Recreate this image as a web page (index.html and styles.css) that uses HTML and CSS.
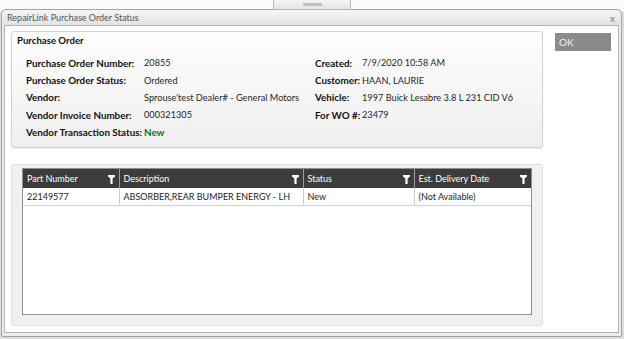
FILE: index.html
```html
<!DOCTYPE html>
<html lang="en">
<head>
    <meta charset="UTF-8">
    <title>RepairLink Purchase Order Status</title>
    <link rel="stylesheet" href="styles.css">
</head>
<body>
    <div class="backdrop">
        <h2 class="bg-title">Purchase Order</h2>
    </div>

    <div class="dialog">
        <div class="titlebar">
            <span class="title">RepairLink Purchase Order Status</span>
            <span class="close">x</span>
        </div>
        <div class="frame">
            <div class="content">
                <div class="main">
                    <section class="panel po">
                        <h3>Purchase Order</h3>
                        <div class="fields">
                            <span class="lbl">Purchase Order Number:</span><span>20855</span>
                            <span class="lbl">Created:</span><span>7/9/2020 10:58 AM</span>

                            <span class="lbl">Purchase Order Status:</span><span>Ordered</span>
                            <span class="lbl">Customer:</span><span>HAAN, LAURIE</span>

                            <span class="lbl">Vendor:</span><span>Sprouse'test Dealer# - General Motors</span>
                            <span class="lbl">Vehicle:</span><span>1997 Buick Lesabre 3.8 L 231 CID V6</span>

                            <span class="lbl">Vendor Invoice Number:</span><span>000321305</span>
                            <span class="lbl">For WO #:</span><span>23479</span>

                            <span class="lbl">Vendor Transaction Status:</span><span class="new">New</span>
                            <span></span><span></span>
                        </div>
                    </section>

                    <section class="panel parts">
                        <div class="grid">
                            <table>
                                <colgroup>
                                    <col class="c1"><col class="c2"><col class="c3"><col class="c4">
                                </colgroup>
                                <thead>
                                    <tr>
                                        <th>Part Number <svg class="filter" viewBox="0 0 7 9"><path d="M0 0H7V1.5L4.6 3.6V9H2.4V3.6L0 1.5Z"/></svg></th>
                                        <th>Description <svg class="filter" viewBox="0 0 7 9"><path d="M0 0H7V1.5L4.6 3.6V9H2.4V3.6L0 1.5Z"/></svg></th>
                                        <th>Status <svg class="filter" viewBox="0 0 7 9"><path d="M0 0H7V1.5L4.6 3.6V9H2.4V3.6L0 1.5Z"/></svg></th>
                                        <th>Est. Delivery Date <svg class="filter" viewBox="0 0 7 9"><path d="M0 0H7V1.5L4.6 3.6V9H2.4V3.6L0 1.5Z"/></svg></th>
                                    </tr>
                                </thead>
                                <tbody>
                                    <tr>
                                        <td>22149577</td>
                                        <td>ABSORBER,REAR BUMPER ENERGY - LH</td>
                                        <td>New</td>
                                        <td>(Not Available)</td>
                                    </tr>
                                </tbody>
                            </table>
                        </div>
                    </section>
                </div>
                <div class="side">
                    <button class="ok">OK</button>
                </div>
            </div>
        </div>
    </div>

    <div class="grip"><span></span></div>
</body>
</html>
```

FILE: styles.css
```css
body {
    margin: 0;
    width: 624px;
    height: 339px;
    overflow: hidden;
    background: #dcdcdc;
    font-family: Lato, "Open Sans", sans-serif;
    font-size: 9.2px;
    color: #262626;
}

.backdrop {
    height: 12px;
    background: #fbfbfb;
    overflow: hidden;
}
.bg-title {
    margin: -11px 0 0 42px;
    font-size: 11px;
    color: #1d2b55;
}

/* splitter grip sitting over the top edge */
.grip {
    position: absolute;
    left: 273px;
    top: 0;
    width: 76px;
    height: 9px;
    border: 1px solid #b5b5b5;
    border-top: none;
    background: linear-gradient(#f4f4f4, #e4e4e8);
    display: flex;
    justify-content: center;
    align-items: center;
}
.grip span {
    width: 19px;
    height: 3px;
    background: #c2c2c2;
}

.dialog {
    position: absolute;
    left: 1px;
    top: 9px;
    width: 621px;
    height: 328px;
    box-sizing: border-box;
    border: 1px solid #a3a3a3;
    border-radius: 5px 5px 2px 2px;
    background: #ececec;
    display: flex;
    flex-direction: column;
}

.titlebar {
    height: 15px;
    display: flex;
    align-items: center;
    justify-content: space-between;
    padding: 0 6px 0 5px;
    background: linear-gradient(#f6f6f6, #e2e2e2);
    border-radius: 5px 5px 0 0;
    color: #555;
}
.title {
    font-size: 9px;
}
.close {
    font-size: 10px;
    color: #777;
}

.frame {
    flex: 1;
    padding: 0 2px 3px;
    display: flex;
}
.content {
    flex: 1;
    background: #fff;
    border: 1px solid #b4b4b4;
    padding: 5px 4px 0 6px;
    display: flex;
    gap: 12px;
}

.main {
    width: 532px;
}

.panel {
    box-sizing: border-box;
    border: 1px solid #d2d2d2;
    border-radius: 3px;
}

.po {
    height: 117px;
    padding: 1px 0 0 5px;
    background: linear-gradient(#fefefe, #efefef);
    box-shadow: 0 1px 1px rgba(0, 0, 0, 0.08);
}
.po h3 {
    margin: 0;
    font-size: 9.6px;
    line-height: 16px;
    color: #111;
}

.fields {
    margin: 5px 0 0 9px;
    display: grid;
    grid-template-columns: 118px 171px 47px auto;
    grid-auto-rows: 17.4px;
    align-items: center;
    white-space: nowrap;
}
.lbl {
    font-size: 9.8px;
    font-weight: bold;
    color: #111;
}
.new {
    font-size: 9.8px;
    font-weight: bold;
    color: #137313;
}

.parts {
    margin-top: 16px;
    height: 162px;
    padding: 3px 10px 10px 10px;
    background: #f0f0f0;
    border-color: #dedede;
}
.grid {
    height: 100%;
    box-sizing: border-box;
    border: 1px solid #8f8f8f;
    background: #fff;
    font-size: 9px;
}
.grid table {
    width: 100%;
    table-layout: fixed;
    border-collapse: collapse;
}
.c1 { width: 96px; }
.c2 { width: 184px; }
.c3 { width: 111px; }
.c4 { width: auto; }

.grid th {
    height: 19px;
    padding: 0 5px 0 4px;
    background: #3c3c3c;
    color: #fff;
    font-weight: normal;
    text-align: left;
    border-right: 1px solid #9a9a9a;
    position: relative;
}
.grid th:last-child {
    border-right: none;
}
.filter {
    position: absolute;
    right: 4px;
    top: 6px;
    width: 7px;
    height: 9px;
    fill: #fff;
}
.grid td {
    height: 17px;
    padding: 0 4px;
    border: 1px solid #cfcfcf;
    border-top: none;
    white-space: nowrap;
    overflow: hidden;
    color: #1e1e1e;
}
.grid td:first-child {
    border-left: none;
}
.grid td:last-child {
    border-right: none;
}

.side {
    width: 56px;
}
.ok {
    width: 56px;
    height: 18px;
    margin-top: 2px;
    border: none;
    background: #8b8b8b;
    color: #f2f2f2;
    font-family: inherit;
    font-size: 10px;
    text-align: left;
    padding: 0 4px;
}
```
